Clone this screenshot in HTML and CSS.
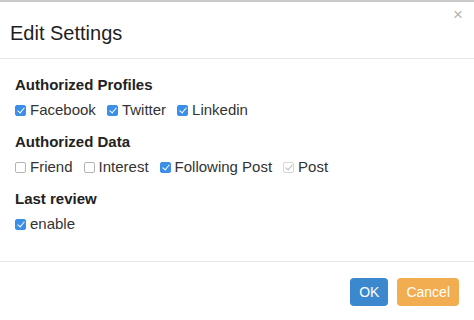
FILE: index.html
```html
<!DOCTYPE html>
<html>

<head>
  <meta charset="UTF-8" />
  <title>Edit Settings</title>

  <link rel="stylesheet" href="styles.css">
</head>

<body>
  <div class="modal">
    <div class="modal-header">
      <span class="close">&times;</span>
      <h4 class="modal-title">Edit Settings</h4>
    </div>
    <div class="modal-body">
      <div class="group">
        <div class="group-title">Authorized Profiles</div>
        <div class="options">
          <label class="check"><span class="box on"></span>Facebook</label>
          <label class="check"><span class="box on"></span>Twitter</label>
          <label class="check"><span class="box on"></span>Linkedin</label>
        </div>
      </div>
      <div class="group">
        <div class="group-title">Authorized Data</div>
        <div class="options">
          <label class="check"><span class="box"></span>Friend</label>
          <label class="check"><span class="box"></span>Interest</label>
          <label class="check"><span class="box on"></span>Following Post</label>
          <label class="check"><span class="box off-on"></span>Post</label>
        </div>
      </div>
      <div class="group">
        <div class="group-title">Last review</div>
        <div class="options">
          <label class="check"><span class="box on"></span>enable</label>
        </div>
      </div>
    </div>
    <div class="modal-footer">
      <button class="btn btn-ok">OK</button>
      <button class="btn btn-cancel">Cancel</button>
    </div>
  </div>
</body>

</html>
```

FILE: styles.css
```css
body {
  margin: 0;
  font-family: "Liberation Sans", Arial, sans-serif;
  color: #333;
  background: #fff;
}

.modal {
  border-top: 2px solid #c9c9c9;
  height: 318px;
}

.modal-header {
  position: relative;
  padding: 19px 10px 13px;
  border-bottom: 1px solid #e5e5e5;

  .modal-title {
    margin: 0;
    font-size: 20px;
    line-height: 24px;
    font-weight: normal;
    color: #1e1e1e;
  }

  .close {
    position: absolute;
    right: 11px;
    top: 3px;
    font-size: 17px;
    line-height: 20px;
    color: #b3b3b3;
  }
}

.modal-body {
  padding: 16px 15px 28px;
  height: 158px;

  .group {
    margin-bottom: 12px;
  }

  .group-title {
    font-size: 15px;
    font-weight: bold;
    line-height: 20px;
    margin-bottom: 5px;
    color: #222;
  }

  .options {
    display: flex;
    gap: 11px;
    font-size: 15px;
    line-height: 20px;
  }
}

.check {
  display: flex;
  align-items: center;
  gap: 4px;

  .box {
    width: 11px;
    height: 11px;
    border: 1px solid #b5b5b5;
    border-radius: 2px;
    background: #fff;
    box-sizing: border-box;
    position: relative;
  }

  .box.on {
    background: #3c8fe8;
    border-color: #3c8fe8;
  }

  .box.on::after,
  .box.off-on::after {
    content: "";
    position: absolute;
    left: 3px;
    top: 0px;
    width: 3px;
    height: 6px;
    border: solid #fff;
    border-width: 0 1.5px 1.5px 0;
    transform: rotate(40deg);
  }

  .box.off-on {
    border-color: #d6d6d6;
  }

  .box.off-on::after {
    border-color: #b8b8b8;
    border-width: 0 1px 1px 0;
  }
}

.modal-footer {
  border-top: 1px solid #e5e5e5;
  padding: 16px 15px 15px;
  display: flex;
  justify-content: flex-end;
  gap: 9px;

  .btn {
    height: 28px;
    padding: 0 9px;
    border: none;
    border-radius: 4px;
    color: #fff;
    font-family: "Liberation Sans", Arial, sans-serif;
    font-size: 14px;
  }

  .btn-ok {
    background: #3b88cf;
  }

  .btn-cancel {
    background: #f1ad4f;
  }
}
```
